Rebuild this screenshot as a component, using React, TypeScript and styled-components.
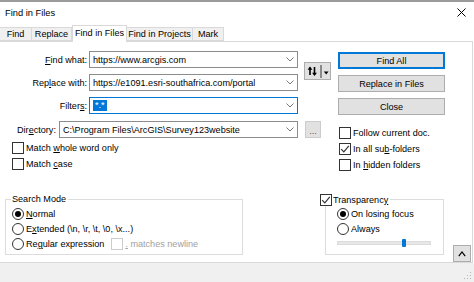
import styled, { createGlobalStyle } from "styled-components";

const GlobalStyle = createGlobalStyle`
  html, body {
    margin: 0;
    padding: 0;
    background: #ffffff;
  }
  body {
    font-family: "Liberation Sans", Arial, sans-serif;
    font-size: 9.1px;
    color: #000000;
  }
  * {
    box-sizing: border-box;
  }
`;

const Window = styled.div`
  width: 474px;
  height: 282px;
  display: flex;
  flex-direction: column;
  background: #ffffff;
  border-top: 2px solid #9b9b9b;
  overflow: hidden;
`;

const TitleBar = styled.div`
  height: 21px;
  display: flex;
  align-items: center;
  justify-content: space-between;
  padding: 0 8px 0 5px;
  font-size: 9.3px;
`;

const TabStrip = styled.div`
  height: 18px;
  display: flex;
  align-items: flex-end;
  position: relative;
  z-index: 1;
`;

const Tab = styled.div<{ $active?: boolean; $w: number }>`
  width: ${(p) => p.$w}px;
  height: ${(p) => (p.$active ? 17 : 14)}px;
  margin-bottom: ${(p) => (p.$active ? -1 : 0)}px;
  display: flex;
  align-items: center;
  justify-content: center;
  background: ${(p) => (p.$active ? "#ffffff" : "#f0f0f0")};
  border: 1px solid #d9d9d9;
  border-bottom: ${(p) => (p.$active ? "none" : "1px solid #d9d9d9")};
  border-left-width: ${(p) => (p.$active ? 1 : 0)}px;
  padding-bottom: ${(p) => (p.$active ? 2 : 0)}px;
  white-space: nowrap;
`;

const Panel = styled.div`
  flex: 1;
  width: 473px;
  display: flex;
  flex-direction: column;
  padding-top: 9px;
  border-top: 1px solid #d9d9d9;
  border-right: 1px solid #d9d9d9;
  border-bottom: 1px solid #d9d9d9;
`;

const TopSection = styled.div`
  display: flex;
  height: 119px;
`;

const LeftCol = styled.div`
  width: 331px;
  display: flex;
  flex-direction: column;
`;

const FormGrid = styled.div`
  display: grid;
  grid-template-columns: 89px 209px 6px 27px;
  grid-template-rows: 17px 17px 17px;
  row-gap: 6px;
`;

const FieldLabel = styled.label<{ $row: number }>`
  grid-column: 1;
  grid-row: ${(p) => p.$row};
  display: flex;
  align-items: center;
  justify-content: flex-end;
  padding-right: 2px;
  white-space: pre;
`;

const ComboCell = styled.div<{ $row: number }>`
  grid-column: 2;
  grid-row: ${(p) => p.$row};
`;

const Combo = styled.div<{ $focused?: boolean; $width: number }>`
  width: ${(p) => p.$width}px;
  height: 17px;
  display: flex;
  align-items: center;
  padding: 0 3px 0 3px;
  background: #ffffff;
  border: 1px solid ${(p) => (p.$focused ? "#0078d7" : "#8c8c8c")};
`;

const ComboText = styled.span`
  flex: 1;
  white-space: nowrap;
  overflow: hidden;
`;

const Selected = styled.span`
  display: inline-block;
  height: 11px;
  line-height: 11px;
  padding: 0 2px;
  background: #0078d7;
  color: #ffffff;
`;

const SwapButton = styled.div`
  grid-column: 4;
  grid-row: 1 / span 2;
  align-self: center;
  width: 27px;
  height: 18px;
  background: #e1e1e1;
  border: 1px solid #adadad;
  display: flex;
`;

const DirectoryRow = styled.div`
  display: flex;
  align-items: center;
  height: 17px;
  margin-top: 7px;
`;

const DirectoryLabel = styled.label`
  width: 59px;
  padding-left: 17px;
  white-space: pre;
`;

const BrowseButton = styled.div`
  width: 16px;
  height: 17px;
  margin-left: 7px;
  background: #e1e1e1;
  border: 1px solid #cccccc;
  color: #555555;
  display: flex;
  align-items: center;
  justify-content: center;
  font-size: 9px;
  padding-top: 2px;
`;

const CheckList = styled.div<{ $top: number; $left: number }>`
  display: flex;
  flex-direction: column;
  gap: 4px;
  margin-top: ${(p) => p.$top}px;
  padding-left: ${(p) => p.$left}px;
`;

const CheckRow = styled.div<{ $disabled?: boolean }>`
  height: 12px;
  display: flex;
  align-items: center;
  gap: 2px;
  white-space: pre;
  color: ${(p) => (p.$disabled ? "#a0a0a0" : "#000000")};
`;

const Box = styled.span<{ $disabled?: boolean }>`
  width: 12px;
  height: 12px;
  flex: none;
  display: flex;
  align-items: center;
  justify-content: center;
  background: #ffffff;
  border: 1px solid ${(p) => (p.$disabled ? "#cccccc" : "#333333")};
`;

const Radio = styled.span<{ $on?: boolean }>`
  width: 12px;
  height: 12px;
  flex: none;
  border-radius: 50%;
  border: 1px solid #333333;
  background: #ffffff;
  display: flex;
  align-items: center;
  justify-content: center;

  &::after {
    content: "";
    width: 6px;
    height: 6px;
    border-radius: 50%;
    background: ${(p) => (p.$on ? "#000000" : "transparent")};
  }
`;

const RightCol = styled.div`
  width: 107px;
  margin-left: 7px;
  padding-top: 1px;
  display: flex;
  flex-direction: column;
`;

const ButtonStack = styled.div`
  display: flex;
  flex-direction: column;
  gap: 6px;
`;

const PushButton = styled.div<{ $default?: boolean }>`
  height: 17px;
  display: flex;
  align-items: center;
  justify-content: center;
  background: #e1e1e1;
  border: ${(p) => (p.$default ? "2px solid #0078d7" : "1px solid #adadad")};
  white-space: nowrap;
`;

const BottomSection = styled.div`
  display: flex;
  align-items: flex-start;
  margin-top: 29px;
`;

const GroupBox = styled.div<{ $left: number; $width: number; $pad: number }>`
  position: relative;
  width: ${(p) => p.$width}px;
  height: 56px;
  margin-left: ${(p) => p.$left}px;
  padding: 8px 0 0 ${(p) => p.$pad}px;
  border: 1px solid #dcdcdc;
  display: flex;
  flex-direction: column;
  gap: 3px;
`;

const Legend = styled.div<{ $top: number; $left: number }>`
  position: absolute;
  top: ${(p) => p.$top}px;
  left: ${(p) => p.$left}px;
  padding: 0 2px 0 1px;
  line-height: 12px;
  background: #ffffff;
  display: flex;
  align-items: center;
  gap: 1px;
  white-space: pre;
`;

const RegexRow = styled.div`
  display: flex;
  align-items: center;
  gap: 7px;
`;

const Slider = styled.div`
  position: relative;
  width: 94px;
  height: 8px;
  margin-top: 1px;
  display: flex;
  align-items: center;
`;

const Track = styled.div`
  width: 100%;
  height: 4px;
  background: #e7e7e7;
  border: 1px solid #dcdcdc;
`;

const Thumb = styled.div`
  position: absolute;
  top: 0;
  width: 4px;
  height: 8px;
  background: #0078d7;
  border-radius: 1px;
`;

const UpButton = styled.div`
  width: 18px;
  height: 17px;
  margin-left: 9px;
  margin-top: 46px;
  background: #e1e1e1;
  border: 1px solid #adadad;
  display: flex;
  align-items: center;
  justify-content: center;
`;

const StatusBar = styled.div`
  height: 19px;
  background: #f0f0f0;
  display: flex;
  align-items: flex-end;
  justify-content: flex-end;
  padding: 0 2px 2px 0;
`;

const Chevron = () => (
  <svg width="8" height="5" viewBox="0 0 8 5">
    <polyline points="0.5,0.5 4,4 7.5,0.5" fill="none" stroke="#7a7a7a" strokeWidth="1" />
  </svg>
);

const CheckMark = () => (
  <svg width="10" height="10" viewBox="0 0 10 10">
    <polyline points="1.2,5.2 3.8,7.8 8.8,1.8" fill="none" stroke="#333333" strokeWidth="1.2" />
  </svg>
);

const CheckBox = ({ checked, disabled }: { checked?: boolean; disabled?: boolean }) => (
  <Box $disabled={disabled}>{checked && <CheckMark />}</Box>
);

const ThumbAt = ({ pos }: { pos: number }) => <Thumb style={{ left: pos }} />;

const App = () => {
  const thumbPos = 65;
  return (
    <>
      <GlobalStyle />
      <Window>
        <TitleBar>
          <span>Find in Files</span>
          <svg width="9" height="9" viewBox="0 0 9 9">
            <path d="M0.5 0.5 L8.5 8.5 M8.5 0.5 L0.5 8.5" stroke="#000000" strokeWidth="1" />
          </svg>
        </TitleBar>

        <TabStrip>
          <Tab $w={32}>Find</Tab>
          <Tab $w={40}>Replace</Tab>
          <Tab $w={55} $active>
            Find in Files
          </Tab>
          <Tab $w={66}>Find in Projects</Tab>
          <Tab $w={31}>Mark</Tab>
        </TabStrip>

        <Panel>
          <TopSection>
            <LeftCol>
              <FormGrid>
                <FieldLabel $row={1}>
                  <span>
                    <u>F</u>ind what:
                  </span>
                </FieldLabel>
                <ComboCell $row={1}>
                  <Combo $width={209}>
                    <ComboText>https://www.arcgis.com</ComboText>
                    <Chevron />
                  </Combo>
                </ComboCell>
                <SwapButton>
                  <svg width="25" height="16" viewBox="0 0 25 16">
                    <path d="M5 4.5 V12" stroke="#000000" strokeWidth="1.6" />
                    <polygon points="2.6,6.8 5,3.6 7.4,6.8" fill="#000000" />
                    <path d="M9.5 4 V11.5" stroke="#000000" strokeWidth="1.6" />
                    <polygon points="7.1,9.7 9.5,12.9 11.9,9.7" fill="#000000" />
                    <path d="M16 2 V15" stroke="#333333" strokeWidth="1" />
                    <polygon points="18.8,8.6 23.6,8.6 21.2,11.6" fill="#000000" />
                  </svg>
                </SwapButton>

                <FieldLabel $row={2}>
                  <span>
                    Rep<u>l</u>ace with:
                  </span>
                </FieldLabel>
                <ComboCell $row={2}>
                  <Combo $width={209}>
                    <ComboText>https://e1091.esri-southafrica.com/portal</ComboText>
                    <Chevron />
                  </Combo>
                </ComboCell>

                <FieldLabel $row={3}>
                  <span>
                    Filter<u>s</u>:
                  </span>
                </FieldLabel>
                <ComboCell $row={3}>
                  <Combo $width={209} $focused>
                    <ComboText>
                      <Selected>*.*</Selected>
                    </ComboText>
                    <Chevron />
                  </Combo>
                </ComboCell>
              </FormGrid>

              <DirectoryRow>
                <DirectoryLabel>
                  <span>
                    Dir<u>e</u>ctory:
                  </span>
                </DirectoryLabel>
                <Combo $width={239}>
                  <ComboText>C:\Program Files\ArcGIS\Survey123website</ComboText>
                  <Chevron />
                </Combo>
                <BrowseButton>...</BrowseButton>
              </DirectoryRow>

              <CheckList $top={4} $left={12}>
                <CheckRow>
                  <CheckBox />
                  <span>
                    Match <u>w</u>hole word only
                  </span>
                </CheckRow>
                <CheckRow>
                  <CheckBox />
                  <span>
                    Match <u>c</u>ase
                  </span>
                </CheckRow>
              </CheckList>
            </LeftCol>

            <RightCol>
              <ButtonStack>
                <PushButton $default>Find All</PushButton>
                <PushButton>Replace in Files</PushButton>
                <PushButton>Close</PushButton>
              </ButtonStack>
              <CheckList $top={12} $left={1}>
                <CheckRow>
                  <CheckBox />
                  <span>Follow current doc.</span>
                </CheckRow>
                <CheckRow>
                  <CheckBox checked />
                  <span>
                    In all su<u>b</u>-folders
                  </span>
                </CheckRow>
                <CheckRow>
                  <CheckBox />
                  <span>
                    In <u>h</u>idden folders
                  </span>
                </CheckRow>
              </CheckList>
            </RightCol>
          </TopSection>

          <BottomSection>
            <GroupBox $left={5} $width={238} $pad={6}>
              <Legend $top={-7} $left={5}>
                Search Mode
              </Legend>
              <CheckRow>
                <Radio $on />
                <span>
                  <u>N</u>ormal
                </span>
              </CheckRow>
              <CheckRow>
                <Radio />
                <span>
                  E<u>x</u>tended (\n, \r, \t, \0, \x...)
                </span>
              </CheckRow>
              <RegexRow>
                <CheckRow>
                  <Radio />
                  <span>
                    Re<u>g</u>ular expression
                  </span>
                </CheckRow>
                <CheckRow $disabled>
                  <CheckBox disabled />
                  <span>
                    <u>.</u> matches newline
                  </span>
                </CheckRow>
              </RegexRow>
            </GroupBox>

            <GroupBox $left={82} $width={119} $pad={11}>
              <Legend $top={-6} $left={-7}>
                <CheckBox checked />
                <span>
                  Transparenc<u>y</u>
                </span>
              </Legend>
              <CheckRow>
                <Radio $on />
                <span>On losing focus</span>
              </CheckRow>
              <CheckRow>
                <Radio />
                <span>Always</span>
              </CheckRow>
              <Slider>
                <Track />
                <ThumbAt pos={thumbPos} />
              </Slider>
            </GroupBox>

            <UpButton>
              <svg width="8" height="6" viewBox="0 0 8 6">
                <polyline points="0.8,5.2 4,1 7.2,5.2" fill="none" stroke="#000000" strokeWidth="1.2" />
              </svg>
            </UpButton>
          </BottomSection>
        </Panel>

        <StatusBar>
          <svg width="9" height="9" viewBox="0 0 9 9">
            <rect x="7" y="1" width="1" height="1" fill="#b5b5b5" />
            <rect x="4" y="4" width="1" height="1" fill="#b5b5b5" />
            <rect x="7" y="4" width="1" height="1" fill="#b5b5b5" />
            <rect x="1" y="7" width="1" height="1" fill="#b5b5b5" />
            <rect x="4" y="7" width="1" height="1" fill="#b5b5b5" />
            <rect x="7" y="7" width="1" height="1" fill="#b5b5b5" />
          </svg>
        </StatusBar>
      </Window>
    </>
  );
};

export default App;
